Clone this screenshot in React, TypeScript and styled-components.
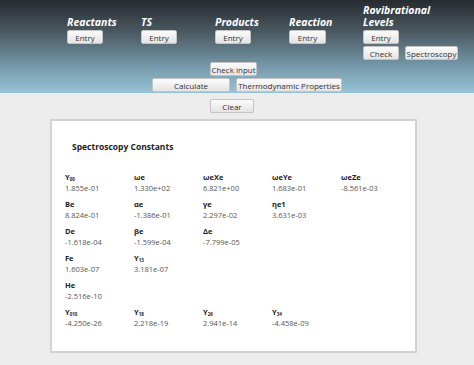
import styled, { createGlobalStyle } from 'styled-components'

const Global = createGlobalStyle`
  html, body {
    margin: 0;
    padding: 0;
    background: #ececec;
    font-family: "Open Sans", "DejaVu Sans", sans-serif;
  }
`

const Page = styled.div`
  width: 474px;
  height: 365px;
  overflow: hidden;
  background: #ececec;
`

const Header = styled.div`
  height: 93px;
  box-sizing: border-box;
  padding-top: 3px;
  background: linear-gradient(to bottom, #262b2f 0%, #4b5a63 35%, #7a9fb1 75%, #98c2d6 100%);
  display: flex;
  flex-direction: column;
  gap: 2px;
`

const Columns = styled.div`
  display: flex;
  padding-left: 67px;
`

const Column = styled.div`
  width: 74px;
  flex-shrink: 0;
  display: flex;
  flex-direction: column;
  gap: 2px;
`

const Heading = styled.div`
  height: 25px;
  display: flex;
  flex-direction: column;
  justify-content: flex-end;
  color: #ffffff;
  font-style: italic;
  font-weight: 700;
  font-size: 10.5px;
  line-height: 12px;
  white-space: nowrap;
`

const Row = styled.div<{ $left?: number; $gap?: number }>`
  display: flex;
  gap: ${p => p.$gap ?? 6}px;
  padding-left: ${p => p.$left ?? 0}px;
`

const Button = styled.div<{ $w: number }>`
  width: ${p => p.$w}px;
  flex-shrink: 0;
  height: 14px;
  box-sizing: border-box;
  display: flex;
  align-items: center;
  justify-content: center;
  font-size: 8px;
  color: #333;
  background: linear-gradient(to bottom, #fbfbfb, #e4e4e4);
  border: 1px solid #c4c4c4;
  border-radius: 2px;
  white-space: nowrap;
`

const ClearRow = styled(Row)`
  margin-top: 6px;
`

const Panel = styled.div`
  margin: 6px 0 0 50px;
  width: 367px;
  height: 234px;
  box-sizing: border-box;
  background: #fff;
  border: 2px solid #d2d2d2;
  padding: 20px 0 0 13px;
`

const PanelTitle = styled.div`
  margin-left: 7px;
  font-size: 8.5px;
  font-weight: 700;
  color: #222;
  height: 12px;
  line-height: 12px;
`

const Grid = styled.div`
  margin-top: 19px;
  display: grid;
  grid-template-columns: repeat(5, 69px);
  row-gap: 5px;
`

const Cell = styled.div`
  display: flex;
  flex-direction: column;
  height: 22px;
`

const Label = styled.div`
  font-size: 7.5px;
  font-weight: 700;
  color: #222;
  height: 10px;
  line-height: 10px;
  sub {
    font-size: 4.5px;
    vertical-align: -1px;
    line-height: 0;
  }
`

const Value = styled.div`
  font-size: 7.5px;
  color: #555;
  height: 12px;
  line-height: 12px;
`

type C = { l: React.ReactNode; v: string } | null

const rows: C[][] = [
  [
    { l: <>Y<sub>00</sub></>, v: '1.855e-01' },
    { l: 'ωe', v: '1.330e+02' },
    { l: 'ωeXe', v: '6.821e+00' },
    { l: 'ωeYe', v: '1.683e-01' },
    { l: 'ωeZe', v: '-8.561e-03' },
  ],
  [
    { l: 'Be', v: '8.824e-01' },
    { l: 'αe', v: '-1.386e-01' },
    { l: 'γe', v: '2.297e-02' },
    { l: 'ηe1', v: '3.631e-03' },
    null,
  ],
  [
    { l: 'De', v: '-1.618e-04' },
    { l: 'βe', v: '-1.599e-04' },
    { l: 'Δe', v: '-7.799e-05' },
    null,
    null,
  ],
  [
    { l: 'Fe', v: '1.603e-07' },
    { l: <>Y<sub>13</sub></>, v: '3.181e-07' },
    null,
    null,
    null,
  ],
  [{ l: 'He', v: '-2.516e-10' }, null, null, null, null],
  [
    { l: <>Y<sub>010</sub></>, v: '-4.250e-26' },
    { l: <>Y<sub>18</sub></>, v: '2.218e-19' },
    { l: <>Y<sub>26</sub></>, v: '2.941e-14' },
    { l: <>Y<sub>34</sub></>, v: '-4.458e-09' },
    null,
  ],
]

export default function App() {
  return (
    <Page>
      <Global />
      <Header>
        <Columns>
          <Column>
            <Heading>Reactants</Heading>
            <Button $w={36}>Entry</Button>
          </Column>
          <Column>
            <Heading>TS</Heading>
            <Button $w={36}>Entry</Button>
          </Column>
          <Column>
            <Heading>Products</Heading>
            <Button $w={36}>Entry</Button>
          </Column>
          <Column>
            <Heading>Reaction</Heading>
            <Button $w={37}>Entry</Button>
          </Column>
          <Column>
            <Heading>
              <span>Rovibrational</span>
              <span>Levels</span>
            </Heading>
            <Button $w={36}>Entry</Button>
            <Row>
              <Button $w={36}>Check</Button>
              <Button $w={53}>Spectroscopy</Button>
            </Row>
          </Column>
        </Columns>
        <Row $left={210}>
          <Button $w={47}>Check input</Button>
        </Row>
        <Row $left={152}>
          <Button $w={78}>Calculate</Button>
          <Button $w={106}>Thermodynamic Properties</Button>
        </Row>
      </Header>
      <ClearRow $left={210}>
        <Button $w={44}>Clear</Button>
      </ClearRow>
      <Panel>
        <PanelTitle>Spectroscopy Constants</PanelTitle>
        <Grid>
          {rows.flat().map((c, i) =>
            c ? (
              <Cell key={i}>
                <Label>{c.l}</Label>
                <Value>{c.v}</Value>
              </Cell>
            ) : (
              <Cell key={i} />
            )
          )}
        </Grid>
      </Panel>
    </Page>
  )
}
